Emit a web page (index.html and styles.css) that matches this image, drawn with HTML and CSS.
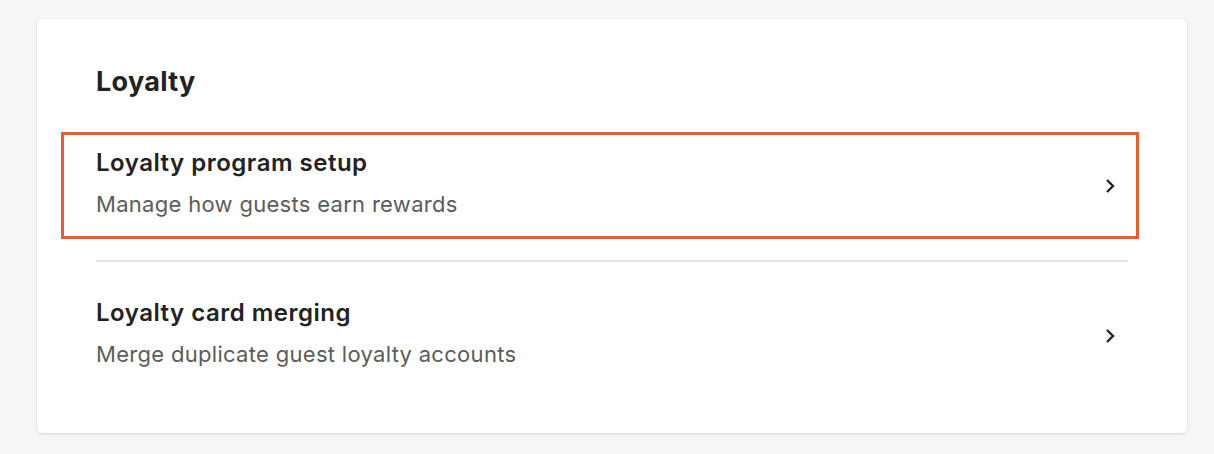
FILE: index.html
```html
<!DOCTYPE html>
<html lang="en">
<head>
    <meta charset="UTF-8">
    <title>Loyalty settings</title>
    <link rel="stylesheet" href="styles.css">
</head>
<body>

    <div class="card">
        <h2 class="card-title">Loyalty</h2>

        <ul class="settings-list">
            <li class="settings-item highlighted">
                <div class="item-text">
                    <div class="item-title">Loyalty program setup</div>
                    <div class="item-desc">Manage how guests earn rewards</div>
                </div>
                <svg class="chevron" width="10" height="16" viewBox="0 0 10 16">
                    <path d="M2 2 L8 8 L2 14" fill="none" stroke="#222" stroke-width="2.3"/>
                </svg>
            </li>
            <li class="divider"></li>
            <li class="settings-item">
                <div class="item-text">
                    <div class="item-title">Loyalty card merging</div>
                    <div class="item-desc">Merge duplicate guest loyalty accounts</div>
                </div>
                <svg class="chevron" width="10" height="16" viewBox="0 0 10 16">
                    <path d="M2 2 L8 8 L2 14" fill="none" stroke="#222" stroke-width="2.3"/>
                </svg>
            </li>
        </ul>
    </div>

</body>
</html>
```

FILE: styles.css
```css
body {
    font-family: Inter, 'Liberation Sans', Arial, sans-serif;
    margin: 0;
    padding: 19px 27px 20px 37px;
    background: #f6f6f6;
    color: #222;
}

.card {
    background: #fff;
    border-radius: 5px;
    box-shadow: 0 1px 3px rgba(0, 0, 0, 0.14);
    padding: 47px 59px 44px;
}

.card-title {
    margin: 0 0 34px;
    font-size: 27px;
    line-height: 32px;
    font-weight: 700;
    letter-spacing: 0.3px;
}

.settings-list {
    list-style: none;
    margin: 0;
    padding: 0;
}

.settings-item {
    position: relative;
    display: flex;
    align-items: center;
    padding: 16px 0 20px;
}

.settings-item.highlighted::after {
    content: "";
    position: absolute;
    top: 0;
    bottom: 0;
    left: -35px;
    right: -11px;
    border: 3px solid #ee5a2a;
}

.item-text {
    flex: 1;
}

.item-title {
    font-size: 24px;
    line-height: 30px;
    font-weight: 600;
    letter-spacing: 0.5px;
    color: #222;
}

.item-desc {
    margin-top: 11px;
    font-size: 22px;
    line-height: 30px;
    letter-spacing: 0.3px;
    color: #5c5c5c;
}

.chevron {
    margin-right: 13px;
    margin-top: 4px;
}

.divider {
    height: 2px;
    background: #e3e3e3;
    margin: 21px 0 20px;
}
```
